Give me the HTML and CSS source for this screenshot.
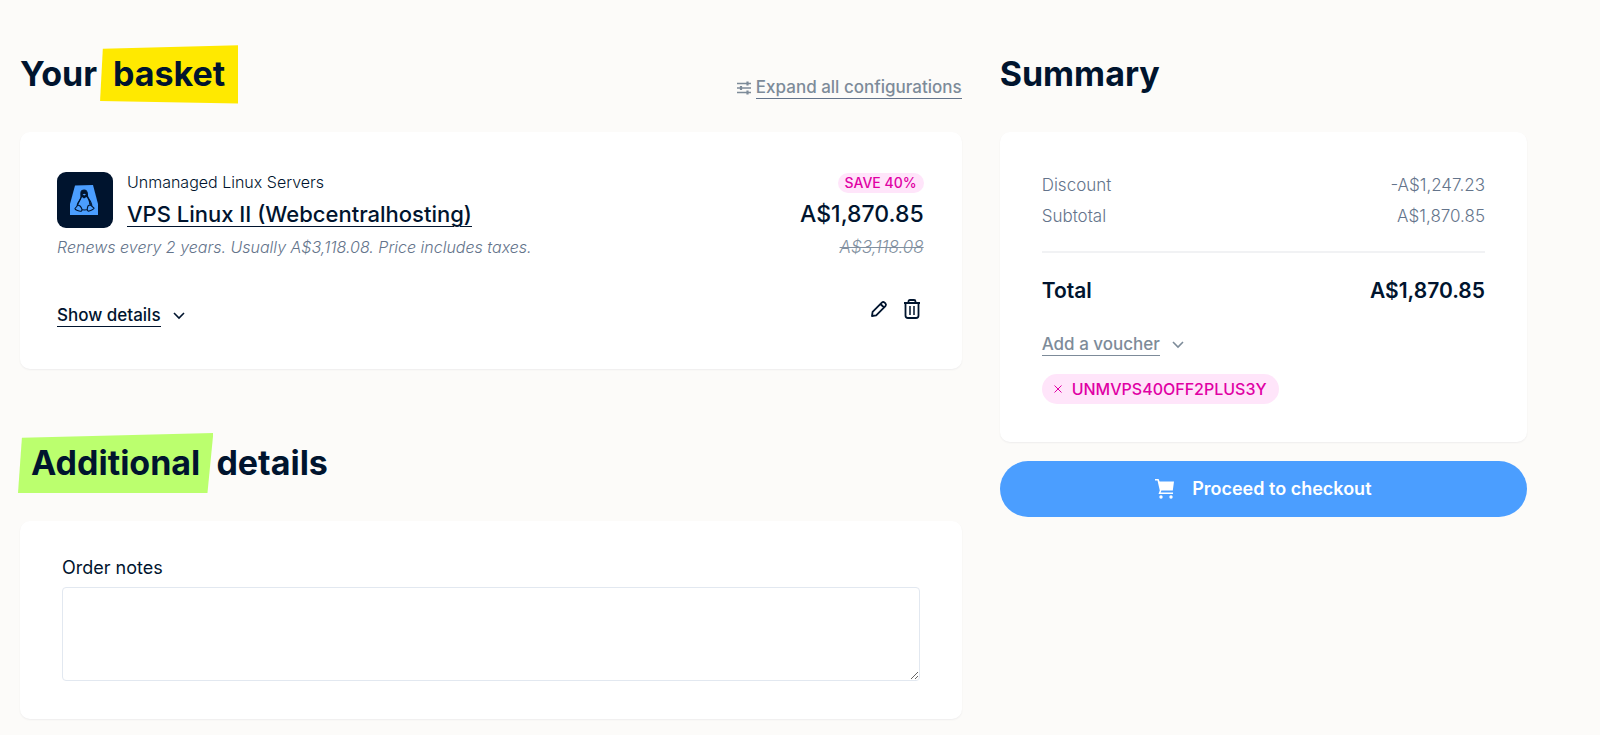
FILE: index.html
```html
<!DOCTYPE html>
<html lang="en">
<head>
    <meta charset="UTF-8">
    <meta name="viewport" content="width=device-width, initial-scale=1.0">
    <title>Your basket</title>
    <link rel="stylesheet" href="styles.css">
</head>
<body>
    <main class="page">
        <div class="column">
            <section>
                <div class="section-head">
                    <h1>Your <span class="mark mark-yellow">basket</span></h1>
                    <a href="#" class="expand">
                        <svg width="16" height="16" viewBox="0 0 16 16" fill="none" stroke="currentColor" stroke-width="1.4">
                            <path d="M1 3.500h14M1 8h14M1 12.500h14"/>
                            <path d="M11.500 1.500v4M5 6v4M11.500 10.500v4" stroke-width="2.2"/>
                        </svg>
                        <span>Expand all configurations</span>
                    </a>
                </div>
                <article class="card product">
                    <div class="product-top">
                        <svg class="logo" width="56" height="56" viewBox="0 0 56 56">
                            <rect width="56" height="56" rx="9" fill="#00142e"/>
                            <path d="M18 13.500L36 13l5 19v11H13V32z" fill="#4b9eff"/>
                            <g fill="none" stroke="#00142e" stroke-width="1.1">
                                <path d="M24 25c0-4-1-7 3-7s3.200 3 3.500 6c.4 3 4 5 4.300 9 .1 3-1.800 5-7.300 5s-7.500-2-7.300-5c.2-3 3.500-4.500 3.800-8z"/>
                                <path d="M21 33l-3 3.500c-.6 1 5 3.500 6.500 2.500 1.500-1-.5-4-1.500-5z" fill="#4b9eff"/>
                                <path d="M33.500 33l3.500 3c.7 1-4.500 3.500-6 3-1.500-.6-.5-4 .3-5.500z" fill="#4b9eff"/>
                            </g>
                            <path d="M24 25c-.3-4-.5-7 3-7s3.300 3 3.600 6l2.800 5 .8 4-2-.5c.2-3-1.200-5.500-2.700-7.500l-2.500 1.500-2-1.500-3 6-1.500 2.500c-.5-2.500 2-5 2.500-7z" fill="#00142e"/>
                            <path d="M25.500 22.500l1.800-.8 1.700.8-1.700 1z" fill="#4b9eff"/>
                        </svg>
                        <div class="product-name">
                            <p class="category">Unmanaged Linux Servers</p>
                            <h2><a href="#">VPS Linux II (Webcentralhosting)</a></h2>
                        </div>
                        <div class="product-price">
                            <span class="save">SAVE 40%</span>
                            <strong>A$1,870.85</strong>
                        </div>
                    </div>
                    <div class="terms">
                        <em>Renews every 2 years. Usually A$3,118.08. Price includes taxes.</em>
                        <del>A$3,118.08</del>
                    </div>
                    <div class="product-foot">
                        <button type="button" class="toggle">
                            <span>Show details</span>
                            <svg width="12" height="8" viewBox="0 0 12 8" fill="none" stroke="currentColor" stroke-width="1.6"><path d="M1 1l5 5 5-5"/></svg>
                        </button>
                        <div class="actions">
                            <button type="button" aria-label="Edit">
                                <svg width="18" height="18" viewBox="0 0 18 18" fill="none" stroke="currentColor" stroke-width="1.8" stroke-linejoin="round">
                                    <path d="M2 16l.6-4.200L11.800 2.600q1.400-1.200 2.800 0l.8.8q1.200 1.400 0 2.800L6.200 15.400zM10.500 4l3.500 3.500"/>
                                </svg>
                            </button>
                            <button type="button" aria-label="Remove">
                                <svg width="18" height="20" viewBox="0 0 18 20" fill="none" stroke="currentColor" stroke-width="1.8">
                                    <path d="M1 4h16M5.500 4V2.500q0-1.500 1.500-1.500h4q1.500 0 1.500 1.500V4M2.500 4v12.500q0 2.500 2.500 2.500h8q2.500 0 2.500-2.500V4"/>
                                    <path d="M7 7v9M11 7v9" stroke-width="1.500"/>
                                </svg>
                            </button>
                        </div>
                    </div>
                </article>
            </section>

            <section>
                <div class="section-head">
                    <h1><span class="mark mark-green">Additional</span> details</h1>
                </div>
                <div class="card notes">
                    <label for="notes">Order notes</label>
                    <textarea id="notes"></textarea>
                </div>
            </section>
        </div>

        <aside class="column">
            <section>
                <div class="section-head">
                    <h1>Summary</h1>
                </div>
                <div class="card summary">
                    <dl class="lines">
                        <div><dt>Discount</dt><dd>-A$1,247.23</dd></div>
                        <div><dt>Subtotal</dt><dd>A$1,870.85</dd></div>
                    </dl>
                    <dl class="total">
                        <dt>Total</dt>
                        <dd>A$1,870.85</dd>
                    </dl>
                    <button type="button" class="toggle muted">
                        <span>Add a voucher</span>
                        <svg width="12" height="8" viewBox="0 0 12 8" fill="none" stroke="currentColor" stroke-width="1.6"><path d="M1 1l5 5 5-5"/></svg>
                    </button>
                    <button type="button" class="voucher">
                        <svg width="8" height="8" viewBox="0 0 8 8" fill="none" stroke="currentColor"><path d="M.5.5l7 7M7.500.5l-7 7"/></svg>
                        UNMVPS40OFF2PLUS3Y
                    </button>
                </div>
                <button type="button" class="checkout">
                    <svg width="20" height="20" viewBox="0 0 20 20" fill="currentColor">
                        <path d="M0 0h3.600l1 2.500H19l-1.200 9H6.400l-.8 2H18V15H3.500l1.300-3.500L2.500 1.600H0z"/>
                        <circle cx="6" cy="18" r="1.700"/>
                        <circle cx="16" cy="18" r="1.700"/>
                    </svg>
                    Proceed to checkout
                </button>
            </section>
        </aside>
    </main>
</body>
</html>
```
FILE: styles.css
```css
* {
    box-sizing: border-box;
}
body {
    margin: 0;
    background-color: #fcfbf9;
    color: #00142e;
    font-family: Inter, sans-serif;
    font-size: 17px;
    line-height: 24px;
}
h1, h2, p, dl, dd {
    margin: 0;
}
a {
    color: inherit;
}
button {
    padding: 0;
    border: none;
    background: none;
    color: inherit;
    font: inherit;
    cursor: pointer;
}
.page {
    display: grid;
    grid-template-columns: 25fr 14fr;
    gap: 38px;
    padding: 44px 73px 16px 20px;
}
.column {
    display: flex;
    flex-direction: column;
    gap: 64px;
}
.section-head {
    display: flex;
    justify-content: space-between;
    align-items: flex-end;
    height: 60px;
    margin-bottom: 28px;
}
h1 {
    align-self: center;
    font-size: 34px;
    line-height: 60px;
    font-weight: 700;
    white-space: nowrap;
}
.mark {
    display: inline-block;
    padding: 0 13px;
}
.mark-yellow {
    margin-left: -5px;
    background-color: #ffe900;
    clip-path: polygon(2% 8%, 100% 2%, 100% 99%, 0 95%);
}
.mark-green {
    margin-left: -2px;
    margin-right: -5px;
    background-color: #bbff6e;
    clip-path: polygon(2% 8%, 100% 0, 97% 100%, 0 100%);
}
.expand {
    display: flex;
    align-items: center;
    gap: 4px;
    padding-bottom: 5px;
    color: #7d8b99;
    font-weight: 500;
    text-decoration: none;
}
.expand span {
    line-height: 22px;
    border-bottom: 1px solid #64748b;
}
.card {
    background-color: #fff;
    border-radius: 10px;
    box-shadow: 0 1px 2px rgba(0, 20, 46, 0.06);
}

/* Basket item */
.product {
    padding: 38px 38px 42px 37px;
}
.product-top {
    display: flex;
    align-items: flex-start;
    gap: 14px;
}
.logo {
    flex: none;
    margin-top: 2px;
}
.product-name {
    flex: 1;
}
.category {
    font-size: 16px;
    font-weight: 300;
}
h2, .product-price strong {
    line-height: 40px;
    font-weight: 500;
}
h2 {
    font-size: 22px;
}
h2 a {
    text-underline-offset: 4px;
    text-decoration-thickness: 1px;
}
.product-price {
    display: flex;
    flex-direction: column;
    align-items: flex-end;
}
.product-price strong {
    font-size: 23px;
}
.save {
    margin: 3px 0 1px;
    padding: 0 7px;
    border-radius: 10px;
    background-color: #ffe5fa;
    color: #e000a4;
    font-size: 14px;
    line-height: 20px;
    font-weight: 500;
}
.terms {
    display: flex;
    justify-content: space-between;
    margin-top: 1px;
    color: #64748b;
    font-size: 16px;
    font-weight: 300;
}
.terms del {
    color: #8290a0;
    font-size: 17px;
    font-style: italic;
}
.product-foot {
    display: flex;
    justify-content: space-between;
    align-items: flex-start;
    margin-top: 38px;
}
.toggle {
    display: flex;
    align-items: center;
    gap: 12px;
    padding-top: 7px;
    font-weight: 500;
}
.toggle span {
    line-height: 22px;
    border-bottom: 1px solid;
}
.muted {
    color: #7d8b99;
}
.actions {
    display: flex;
    align-items: center;
    gap: 15px;
    padding: 2px 3px 0 0;
}
.actions svg {
    display: block;
}

/* Order notes */
.notes {
    padding: 34px 42px 38px;
}
.notes label {
    display: block;
    margin-bottom: 7px;
    font-size: 18px;
    line-height: 25px;
}
.notes textarea {
    display: block;
    width: 100%;
    height: 94px;
    padding: 8px;
    border: 1px solid #e2e8f0;
    border-radius: 4px;
    font: inherit;
}

/* Summary */
.summary {
    padding: 39px 42px 38px;
}
.lines {
    display: grid;
    gap: 7px;
    padding: 2px 0 23px;
    border-bottom: 2px solid #f1f2f4;
    color: #64748b;
    font-weight: 300;
}
.lines div, .total {
    display: flex;
    justify-content: space-between;
}
.total {
    margin: 22px 0 19px;
    font-size: 21px;
    line-height: 32px;
    font-weight: 600;
}
.voucher {
    display: flex;
    align-items: center;
    gap: 10px;
    margin-top: 18px;
    padding: 0 12px;
    border-radius: 15px;
    background-color: #ffe5fa;
    color: #e000a4;
    font-size: 16px;
    line-height: 30px;
    font-weight: 500;
}
.checkout {
    display: flex;
    justify-content: center;
    align-items: center;
    gap: 17px;
    width: 100%;
    margin-top: 19px;
    border-radius: 28px;
    background-color: #4b9eff;
    color: #fff;
    font-size: 18px;
    line-height: 56px;
    font-weight: 600;
}
```
